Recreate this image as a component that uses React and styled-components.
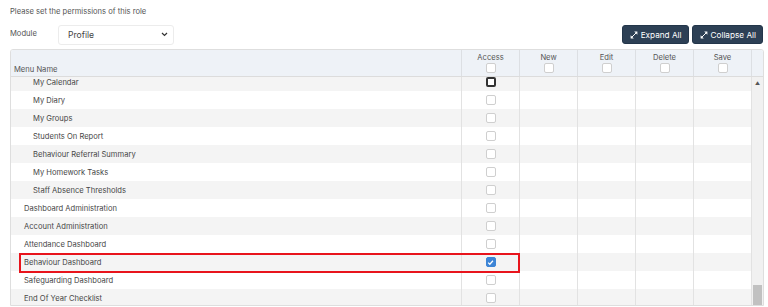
import React, { useLayoutEffect, useRef } from 'react'
import styled, { createGlobalStyle } from 'styled-components'

const GlobalStyle = createGlobalStyle`
  body {
    margin: 0;
    background: #ffffff;
    font-family: Inter, "Noto Sans", Arial, sans-serif;
    color: #444;
  }
`

const rows = [
    { name: 'My Calendar', sub: true, focus: true },
    { name: 'My Diary', sub: true },
    { name: 'My Groups', sub: true },
    { name: 'Students On Report', sub: true },
    { name: 'Behaviour Referral Summary', sub: true },
    { name: 'My Homework Tasks', sub: true },
    { name: 'Staff Absence Thresholds', sub: true },
    { name: 'Dashboard Administration' },
    { name: 'Account Administration' },
    { name: 'Attendance Dashboard' },
    { name: 'Behaviour Dashboard', checked: true, highlight: true },
    { name: 'Safeguarding Dashboard' },
    { name: 'End Of Year Checklist' },
]

const columns = ['New', 'Edit', 'Delete', 'Save']

function ExpandIcon() {
    return (
        <svg width="8" height="8" viewBox="0 0 8 8">
            <path d="M1.6 6.4 L6.4 1.6" stroke="#fff" strokeWidth="1" />
            <path d="M4.2 0.6 H7.4 V3.8 Z" fill="#fff" />
            <path d="M0.6 4.2 V7.4 H3.8 Z" fill="#fff" />
        </svg>
    )
}

function Check() {
    return (
        <svg width="7" height="7" viewBox="0 0 8 8">
            <path d="M1.3 4.2 L3.2 6 L6.8 2" stroke="#fff" strokeWidth="1.4" fill="none" />
        </svg>
    )
}

function App() {
    const viewRef = useRef(null)

    // the list is scrolled a few pixels, so the first row sits under the header
    useLayoutEffect(() => {
        if (viewRef.current) viewRef.current.scrollTop = 4
    }, [])

    return (
        <Page>
            <GlobalStyle />
            <Intro>Please set the permissions of this role</Intro>
            <Toolbar>
                <ModuleLabel>Module</ModuleLabel>
                <Select>
                    <span>Profile</span>
                    <svg width="7" height="5" viewBox="0 0 7 5">
                        <path d="M1 1 L3.5 3.5 L6 1" stroke="#333" strokeWidth="1.2" fill="none" />
                    </svg>
                </Select>
                <Buttons>
                    <ActionButton><ExpandIcon /> Expand All</ActionButton>
                    <ActionButton><ExpandIcon /> Collapse All</ActionButton>
                </Buttons>
            </Toolbar>

            <Table>
                <HeadRow>
                    <HeadCell $left>Menu Name</HeadCell>
                    <HeadCell>
                        Access
                        <Box />
                    </HeadCell>
                    {columns.map(c => (
                        <HeadCell key={c}>
                            {c}
                            <Box />
                        </HeadCell>
                    ))}
                    <HeadFiller />
                </HeadRow>
                <Body>
                    <Viewport ref={viewRef}>
                        {rows.map((r, i) => (
                            <Row key={r.name} $odd={i % 2 === 1} $highlight={r.highlight}>
                                <NameCell $sub={r.sub}>{r.name}</NameCell>
                                <Cell>
                                    <Box $checked={r.checked} $focus={r.focus}>
                                        {r.checked && <Check />}
                                    </Box>
                                </Cell>
                                {columns.map(c => <Cell key={c} />)}
                            </Row>
                        ))}
                    </Viewport>
                    <ScrollTrack>
                        <Arrow>▲</Arrow>
                        <Spacer />
                        <Thumb />
                    </ScrollTrack>
                </Body>
            </Table>
        </Page>
    )
}

const Page = styled.div`
    padding: 7px 5px 0 10px;
`

const Intro = styled.p`
    margin: 0;
    font-size: 7.6px;
    line-height: 10px;
    color: #555;
`

const Toolbar = styled.div`
    display: flex;
    align-items: center;
    margin-top: 8px;
    height: 19px;
`

const ModuleLabel = styled.span`
    font-size: 7.6px;
    color: #555;
    width: 48px;
    margin-top: -3px;
`

const Select = styled.div`
    box-sizing: border-box;
    width: 116px;
    height: 20px;
    border: 1px solid #ececec;
    border-radius: 3px;
    display: flex;
    align-items: center;
    justify-content: space-between;
    padding: 0 5px 0 9px;
    font-size: 8.6px;
    color: #444;
`

const Buttons = styled.div`
    margin-left: auto;
    display: flex;
    gap: 3px;
`

const ActionButton = styled.button`
    height: 19px;
    padding: 0 6px 0 7px;
    background: #2d4055;
    border: 1px solid #23364a;
    border-radius: 3px;
    color: #fff;
    font-family: Inter, sans-serif;
    font-size: 8.2px;
    display: flex;
    align-items: center;
    gap: 3px;
`

const Table = styled.div`
    margin-top: 5px;
    border: 1px solid #dedede;
    border-radius: 3px 3px 0 0;
    overflow: hidden;
    width: 752px;
`

const HeadRow = styled.div`
    display: grid;
    grid-template-columns: 450px repeat(5, 58px) 12px;
    height: 26px;
    background: #eef2f7;
    border-bottom: 1px solid #dcdcdc;
`

const HeadCell = styled.div`
    display: flex;
    flex-direction: column;
    align-items: ${p => (p.$left ? 'flex-start' : 'center')};
    justify-content: ${p => (p.$left ? 'flex-end' : 'flex-start')};
    gap: 1px;
    padding: ${p => (p.$left ? '0 0 2px 3px' : '3px 0 0')};
    border-left: ${p => (p.$left ? 'none' : '1px solid #dcdfe3')};
    font-size: 7.6px;
    color: #555;
`

const HeadFiller = styled.div`
    border-left: 1px solid #dcdfe3;
`

const Body = styled.div`
    display: flex;
    height: 228px;
`

const Viewport = styled.div`
    flex: 1;
    overflow: hidden;
`

const Row = styled.div`
    position: relative;
    display: grid;
    grid-template-columns: 450px repeat(5, 58px);
    height: 18px;
    background: ${p => (p.$odd ? '#ffffff' : '#f4f4f4')};

    ${p => p.$highlight && `
        &::after {
            content: '';
            position: absolute;
            z-index: 1;
            left: 8px;
            top: 0;
            width: 497px;
            height: 16px;
            border: 2px solid #e8141c;
            pointer-events: none;
        }
    `}
`

const NameCell = styled.div`
    display: flex;
    align-items: center;
    padding-left: ${p => (p.$sub ? '22px' : '13px')};
    font-size: 7.6px;
    color: #474747;
`

const Cell = styled.div`
    display: flex;
    align-items: center;
    justify-content: center;
    border-left: 1px solid #e2e2e2;
`

const Box = styled.span`
    box-sizing: border-box;
    width: 10px;
    height: 10px;
    border-radius: 2px;
    display: flex;
    align-items: center;
    justify-content: center;
    background: ${p => (p.$checked ? '#3d85d6' : '#fff')};
    border: ${p =>
        p.$focus ? '2px solid #333' : p.$checked ? '1px solid #3d85d6' : '1px solid #cfcfcf'};
`

const ScrollTrack = styled.div`
    width: 11px;
    background: #f1f1f1;
    border-left: 1px solid #e2e2e2;
    display: flex;
    flex-direction: column;
    align-items: center;
`

const Arrow = styled.div`
    height: 12px;
    line-height: 12px;
    font-size: 5px;
    color: #555;
`

const Spacer = styled.div`
    flex: 1;
`

const Thumb = styled.div`
    width: 9px;
    height: 20px;
    background: #c1c1c1;
`

export default App
